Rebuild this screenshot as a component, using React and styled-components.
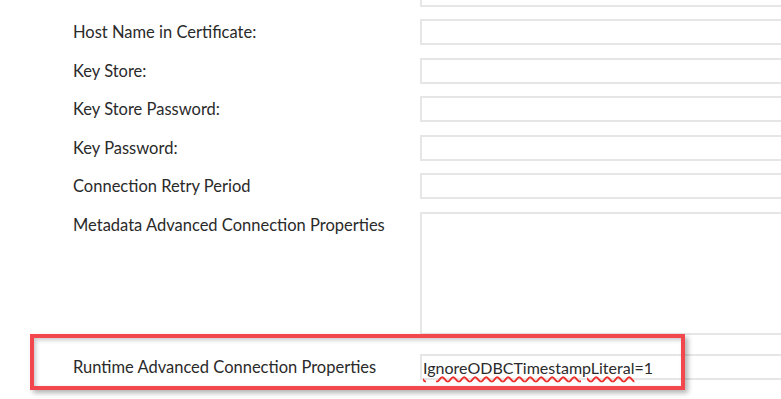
import React from "react";
import styled, { createGlobalStyle } from "styled-components";

const GlobalStyle = createGlobalStyle`
	html, body {
		margin: 0;
		padding: 0;
		background: #ffffff;
		overflow: hidden;
	}
	body {
		font-family: "Lato", "Liberation Sans", sans-serif;
		color: #2a2a2a;
	}
`;

const Page = styled.div`
	width: 781px;
	height: 399px;
	overflow: hidden;
`;

const Form = styled.div`
	display: flex;
	flex-direction: column;
	gap: 12.5px;
	margin-top: -19.5px;
	padding-left: 73px;
`;

const Row = styled.div`
	position: relative;
	display: grid;
	grid-template-columns: 347px 420px;
	align-items: start;
	margin-top: ${(p) => p.$extraTop || 0}px;
`;

const Label = styled.div`
	font-size: 16.5px;
	line-height: 26px;
	white-space: nowrap;
`;

const Field = styled.div`
	box-sizing: border-box;
	height: ${(p) => p.$height || 26}px;
	border: 2px solid #e6e6e6;
	background: #ffffff;
	font-size: 16px;
	line-height: 22px;
	padding: 1px 1px;
	white-space: nowrap;
	color: #2a2a2a;
`;

const Misspelled = styled.span`
	text-decoration: underline wavy #ec2f2b;
	text-decoration-thickness: 1.5px;
	text-underline-offset: 2px;
`;

const Highlight = styled.div`
	position: absolute;
	left: -43px;
	top: -20px;
	width: 655px;
	height: 56px;
	box-sizing: border-box;
	border: 4px solid #f2474c;
	box-shadow: 3px 3px 5px rgba(0, 0, 0, 0.3),
		inset 2px 2px 4px rgba(0, 0, 0, 0.22);
	pointer-events: none;
`;

const fields = [
	{ label: "" },
	{ label: "Host Name in Certificate:" },
	{ label: "Key Store:" },
	{ label: "Key Store Password:" },
	{ label: "Key Password:" },
	{ label: "Connection Retry Period" },
];

function App() {
	return (
		<Page>
			<GlobalStyle />
			<Form>
				{fields.map((f, i) => (
					<Row key={i}>
						<Label>{f.label}</Label>
						<Field />
					</Row>
				))}
				<Row>
					<Label>Metadata Advanced Connection Properties</Label>
					<Field $height={123} />
				</Row>
				<Row $extraTop={6.5}>
					<Label>Runtime Advanced Connection Properties</Label>
					<Field>
						<Misspelled>IgnoreODBCTimestampLiteral</Misspelled>=1
					</Field>
					<Highlight />
				</Row>
			</Form>
		</Page>
	);
}

export default App;
